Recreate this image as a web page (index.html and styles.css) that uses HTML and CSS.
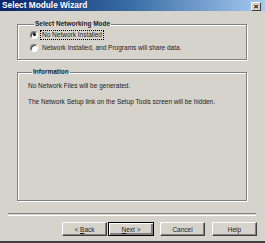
FILE: index.html
```html
<!DOCTYPE html>
<html>
<head>
<meta charset="utf-8">
<link rel="stylesheet" href="styles.css">
</head>
<body>
<div class="window">
  <div class="titlebar">
    <span class="title">Select Module Wizard</span>
    <span class="close">×</span>
  </div>
  <div class="content">
    <fieldset class="group group-mode">
      <legend>Select Networking Mode</legend>
      <div class="option">
        <span class="radio checked"></span>
        <span class="label focus">No Network Installed</span>
      </div>
      <div class="option">
        <span class="radio"></span>
        <span class="label">Network Installed, and Programs will share data.</span>
      </div>
    </fieldset>
    <fieldset class="group group-info">
      <legend>Information</legend>
      <p>No Network Files will be generated.</p>
      <p>The Network Setup link on the Setup Tools screen will be hidden.</p>
    </fieldset>
  </div>
  <div class="separator"></div>
  <div class="buttons">
    <button class="btn btn-back">&lt; <u>B</u>ack</button>
    <button class="btn btn-next default"><u>N</u>ext &gt;</button>
    <button class="btn btn-cancel">Cancel</button>
    <button class="btn btn-help">Help</button>
  </div>
</div>
</body>
</html>
```
FILE: styles.css
```css
html, body {
  margin: 0;
  padding: 0;
  background: #d4d0c8;
}
.window {
  width: 265px;
  height: 243px;
  box-sizing: border-box;
  background: #d6d3cc;
  border-bottom: 2px solid #404040;
  display: flex;
  flex-direction: column;
  font-family: "Liberation Sans", Arial, sans-serif;
  font-size: 6.5px;
  color: #1a1a1a;
  overflow: hidden;
}
.titlebar {
  height: 11px;
  flex: none;
  display: flex;
  align-items: center;
  justify-content: space-between;
  padding: 0 4px 0 2px;
  background: linear-gradient(to right, #0a246a 0%, #3a6ea5 50%, #a6caf0 100%);
}
.title {
  color: #fff;
  font-weight: bold;
  font-size: 8.3px;
  line-height: 11px;
}
.close {
  width: 10px;
  height: 9px;
  margin-top: 1px;
  box-sizing: border-box;
  background: #d4d0c8;
  border: 1px solid;
  border-color: #fff #404040 #404040 #fff;
  font-size: 8px;
  line-height: 7px;
  font-weight: bold;
  text-align: center;
  color: #000;
}
.content {
  padding: 9px 18px 0 17px;
  display: flex;
  flex-direction: column;
  gap: 8px;
}
.group {
  margin: 0;
  padding: 0;
  border: 1px solid #808080;
  box-shadow: 1px 1px 0 #fff, inset 1px 1px 0 #fff;
  min-width: 0;
}
.group legend {
  font-weight: bold;
  font-size: 6.5px;
  line-height: 8px;
  padding: 0 1px;
  margin-left: 4px;
}
.group-mode {
  height: 40px;
  box-sizing: border-box;
  display: flex;
  flex-direction: column;
  padding: 2px 0 0 12px;
  gap: 4px;
}
.option {
  display: flex;
  align-items: center;
  gap: 3px;
  height: 9px;
}
.radio {
  width: 8px;
  height: 8px;
  box-sizing: border-box;
  border-radius: 50%;
  background: #fff;
  border: 1px solid;
  border-color: #808080 #fff #fff #808080;
  box-shadow: inset 1px 1px 0 #404040;
  display: flex;
  align-items: center;
  justify-content: center;
}
.radio.checked::after {
  content: "";
  width: 3px;
  height: 3px;
  border-radius: 50%;
  background: #000;
}
.label {
  line-height: 8px;
  padding: 0 1px;
}
.label.focus {
  outline: 1px dotted #000;
}
.group-info {
  height: 133px;
  box-sizing: border-box;
  padding: 6px 0 0 10px;
}
.group-info p {
  margin: 0 0 8px;
  line-height: 8px;
}
.separator {
  margin: 12px 9px 0 8px;
  height: 1px;
  border-top: 1px solid #808080;
  border-bottom: 1px solid #fff;
}
.buttons {
  display: flex;
  justify-content: flex-end;
  padding: 6px 8px 0 0;
}
.btn {
  width: 45px;
  height: 14px;
  padding: 0;
  box-sizing: border-box;
  background: #d6d3cc;
  font-family: "Liberation Sans", Arial, sans-serif;
  font-size: 6.5px;
  color: #1a1a1a;
  border: 1px solid;
  border-color: #fff #404040 #404040 #fff;
  box-shadow: inset -1px -1px 0 #808080;
}
.btn.default {
  border: 1px solid #000;
  box-shadow: inset 1px 1px 0 #fff, inset -2px -2px 0 #808080;
  margin-left: 1px;
  width: 46px;
}
.btn-cancel {
  margin-left: 6px;
}
.btn-help {
  margin-left: 7px;
}
```
